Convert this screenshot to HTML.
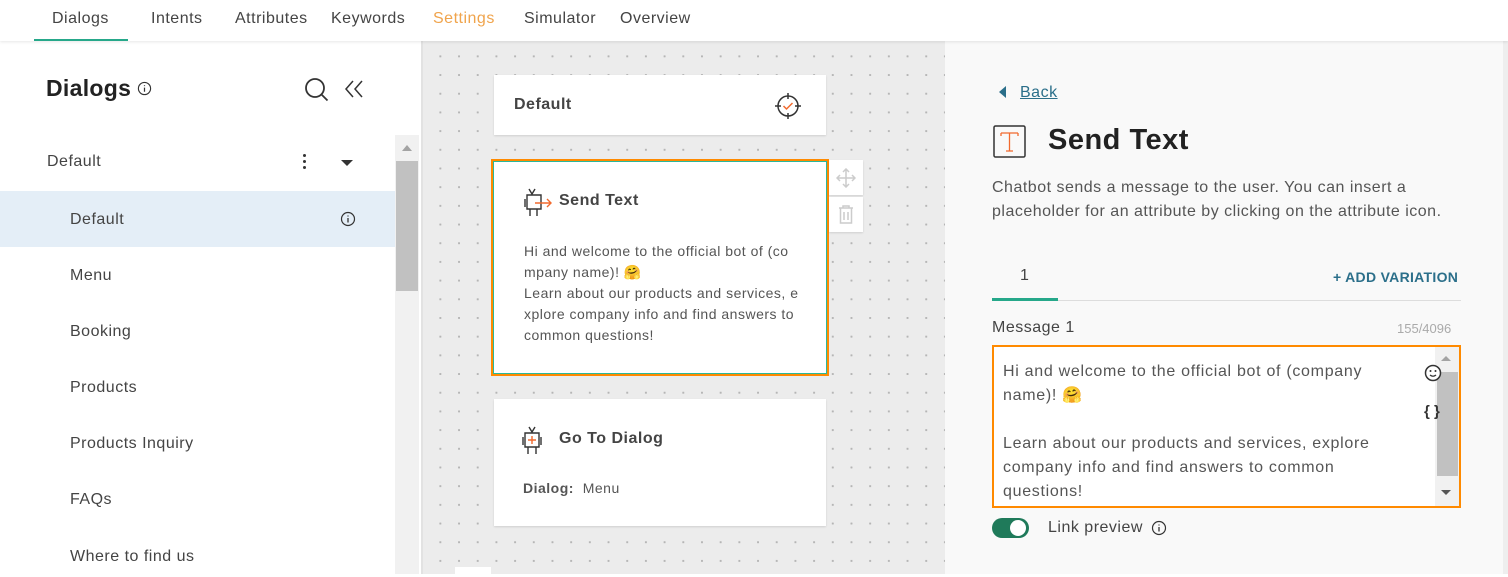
<!DOCTYPE html>
<html><head><meta charset="utf-8"><style>
*{box-sizing:border-box;margin:0;padding:0}
body{width:1508px;height:574px;overflow:hidden;font-family:"Liberation Sans",sans-serif;background:#fff;position:relative;color:#333;letter-spacing:.5px}
.abs{position:absolute}
.nav{left:0;top:0;width:1508px;height:41px;background:#fff;box-shadow:0 1px 3px rgba(0,0,0,.1);z-index:5}
.nav span{position:absolute;top:10px;font-size:16px;color:#444}
.side{left:0;top:41px;width:395px;height:533px;background:#fff}
.sb{left:395px;top:135px;width:24px;height:439px;background:#f1f1f1}
.canvas{left:421px;top:41px;width:524px;height:533px;background-color:#ececec;background-image:radial-gradient(#b5b5b5 1px,transparent 1.2px);background-size:18.7px 18.7px;background-position:8px 6px;border-left:2px solid #e2e2e2}
.card{background:#fff;box-shadow:0 1px 2px rgba(0,0,0,.12)}
.right{left:945px;top:41px;width:558px;height:533px;background:#f9f9f9}
.item{position:absolute;left:70px;font-size:16px;color:#444}
</style></head><body>
<div class="abs nav">
<span style="left:52px">Dialogs</span>
<div class="abs" style="left:34px;top:39px;width:94px;height:2px;background:#26a88a"></div>
<span style="left:151px">Intents</span>
<span style="left:235px">Attributes</span>
<span style="left:331px">Keywords</span>
<span style="left:433px;color:#f0a44c">Settings</span>
<span style="left:524px">Simulator</span>
<span style="left:620px">Overview</span>
</div>
<div class="abs side">
<div class="abs" style="left:46px;top:34px;font-size:23px;font-weight:bold;color:#222;letter-spacing:.3px">Dialogs</div>
<svg class="abs" style="left:137px;top:40px" width="15" height="15" viewBox="0 0 16 16"><circle cx="8" cy="8" r="6.5" fill="none" stroke="#333" stroke-width="1.2"/><path d="M8 7v4.5M8 4.5v1" stroke="#333" stroke-width="1.3"/></svg>
<svg class="abs" style="left:304px;top:36px" width="26" height="26" viewBox="0 0 26 26"><circle cx="11" cy="11" r="9" fill="none" stroke="#333" stroke-width="1.8"/><path d="M17.5 17.5l6 6" stroke="#333" stroke-width="1.8"/></svg>
<svg class="abs" style="left:343px;top:38px" width="22" height="20" viewBox="0 0 22 20"><path d="M10 2L3 10l7 8M19 2l-7 8 7 8" fill="none" stroke="#333" stroke-width="1.5"/></svg>
<div class="item" style="left:47px;top:112px">Default</div>
<div class="abs" style="left:303px;top:113px;width:3px;height:3px;background:#333;border-radius:50%;box-shadow:0 6px 0 #333,0 12px 0 #333"></div>
<div class="abs" style="left:341px;top:119px;border-left:6px solid transparent;border-right:6px solid transparent;border-top:6px solid #333"></div>
<div class="abs" style="left:0;top:150px;width:395px;height:56px;background:#e4eef7"></div>
<div class="item" style="top:170px">Default</div>
<svg class="abs" style="left:340px;top:170px" width="16" height="16" viewBox="0 0 16 16"><circle cx="8" cy="8" r="6.5" fill="none" stroke="#333" stroke-width="1.2"/><path d="M8 7v4.5M8 4.5v1" stroke="#333" stroke-width="1.3"/></svg>
<div class="item" style="top:226px">Menu</div>
<div class="item" style="top:282px">Booking</div>
<div class="item" style="top:338px">Products</div>
<div class="item" style="top:394px">Products Inquiry</div>
<div class="item" style="top:450px">FAQs</div>
<div class="item" style="top:507px">Where to find us</div>
</div>
<div class="abs sb"><div class="abs" style="left:7px;top:10px;border-left:5px solid transparent;border-right:5px solid transparent;border-bottom:6px solid #a3a3a3"></div><div class="abs" style="left:1px;top:26px;width:22px;height:130px;background:#c1c1c1"></div></div>
<div class="abs canvas"></div>
<div class="abs card" style="left:494px;top:75px;width:332px;height:60px"><div class="abs" style="left:20px;top:21px;font-size:16px;font-weight:bold;color:#444">Default</div>
<svg class="abs" style="left:280px;top:17px" width="28" height="28" viewBox="0 0 28 28"><circle cx="14" cy="14" r="10" fill="none" stroke="#333" stroke-width="1.5"/><path d="M14 1v6M14 21v6M1 14h6M21 14h6" stroke="#333" stroke-width="1.5"/><path d="M9.5 14l3 3 6-6" fill="none" stroke="#f26a2e" stroke-width="1.5"/></svg></div>
<div class="abs card" style="left:491px;top:159px;width:338px;height:217px;border:2px solid #ff8a00;box-shadow:inset 0 0 0 1px #2ab89a">
<svg class="abs" style="left:30px;top:26px" width="30" height="32" viewBox="0 0 30 32"><path d="M6 2l3 5 3-5M4 8h14v14H4zM2 12v8M7 22v7M14 22v7" fill="none" stroke="#333" stroke-width="1.4"/><path d="M12 16h16M24 12l4 4-4 4" fill="none" stroke="#f26a2e" stroke-width="1.4"/></svg>
<div class="abs" style="left:66px;top:31px;font-size:16px;font-weight:bold;color:#444">Send Text</div>
<div class="abs" style="left:31px;top:80px;font-size:14px;line-height:21px;color:#555;white-space:nowrap">Hi and welcome to the official bot of (co<br>mpany name)! 🤗<br>Learn about our products and services, e<br>xplore company info and find answers to<br>common questions!</div></div>
<div class="abs card" style="left:829px;top:160px;width:34px;height:35px"><svg class="abs" style="left:7px;top:8px" width="20" height="20" viewBox="0 0 20 20"><path d="M10 1v18M1 10h18M7 4l3-3 3 3M7 16l3 3 3-3M4 7l-3 3 3 3M16 7l3 3-3 3" fill="none" stroke="#ccc" stroke-width="1.5"/></svg></div>
<div class="abs card" style="left:829px;top:197px;width:34px;height:35px"><svg class="abs" style="left:9px;top:7px" width="16" height="20" viewBox="0 0 16 20"><path d="M1 4h14M5 4V2h6v2M2.5 4v15h11V4M6 8v8M10 8v8" fill="none" stroke="#ccc" stroke-width="1.5"/></svg></div>
<div class="abs card" style="left:494px;top:399px;width:332px;height:127px">
<svg class="abs" style="left:28px;top:26px" width="28" height="32" viewBox="0 0 28 32"><path d="M7 2l3 5 3-5M3 8h14v14H3zM1 12v8M19 12v8M6 22v7M14 22v7" fill="none" stroke="#333" stroke-width="1.4"/><path d="M10 11v8M6 15h8" stroke="#f26a2e" stroke-width="1.4"/></svg>
<div class="abs" style="left:65px;top:31px;font-size:16px;font-weight:bold;color:#444">Go To Dialog</div>
<div class="abs" style="left:29px;top:81px;font-size:14px;color:#555"><b>Dialog:</b>&nbsp;&nbsp;Menu</div></div>
<div class="abs" style="left:455px;top:567px;width:36px;height:10px;background:#fff"></div>
<div class="abs right">
<div class="abs" style="left:54px;top:45px;border-top:6px solid transparent;border-bottom:6px solid transparent;border-right:7px solid #2b6f8a"></div>
<div class="abs" style="left:75px;top:43px;font-size:16px;color:#2b6f8a;text-decoration:underline">Back</div>
<svg class="abs" style="left:48px;top:84px" width="34" height="34" viewBox="0 0 34 34"><rect x="1" y="1" width="31" height="31" rx="1.5" fill="none" stroke="#333" stroke-width="1.5"/><path d="M8 8h17M16.5 8v18M13 26h7M8 8v3M25 8v3" fill="none" stroke="#f26a2e" stroke-width="1.3"/></svg>
<div class="abs" style="left:103px;top:83px;font-size:29px;font-weight:bold;color:#222">Send Text</div>
<div class="abs" style="left:47px;top:135px;font-size:16px;line-height:24px;color:#555;white-space:nowrap">Chatbot sends a message to the user. You can insert a<br>placeholder for an attribute by clicking on the attribute icon.</div>
<div class="abs" style="left:75px;top:226px;font-size:16px;color:#444">1</div>
<div class="abs" style="left:388px;top:228px;font-size:14px;font-weight:bold;color:#2b6f8a;letter-spacing:.3px">+ ADD VARIATION</div>
<div class="abs" style="left:47px;top:259px;width:469px;height:1px;background:#ddd"></div>
<div class="abs" style="left:47px;top:257px;width:66px;height:3px;background:#26a88a"></div>
<div class="abs" style="left:47px;top:278px;font-size:16px;color:#444">Message 1</div>
<div class="abs" style="left:452px;top:280px;font-size:13px;color:#aaa;letter-spacing:0">155/4096</div>
<div class="abs" style="left:47px;top:304px;width:469px;height:163px;background:#fff;border:2px solid #ff8a00">
<div class="abs" style="left:9px;top:13px;width:400px;font-size:16px;line-height:24px;color:#555;letter-spacing:.7px">Hi and welcome to the official bot of (company name)! 🤗<br><br>Learn about our products and services, explore company info and find answers to common questions!</div>
<div class="abs" style="left:441px;top:0;width:24px;height:159px;background:#f1f1f1"><div class="abs" style="left:6px;top:9px;border-left:5px solid transparent;border-right:5px solid transparent;border-bottom:5px solid #a3a3a3"></div><div class="abs" style="left:2px;top:25px;width:21px;height:104px;background:#c1c1c1"></div><div class="abs" style="left:6px;top:143px;border-left:5px solid transparent;border-right:5px solid transparent;border-top:5px solid #555"></div></div>
<svg class="abs" style="left:430px;top:17px" width="18" height="18" viewBox="0 0 18 18"><circle cx="9" cy="9" r="7.5" fill="#fff" stroke="#333" stroke-width="1.5"/><circle cx="6.5" cy="7" r="1" fill="#333"/><circle cx="11.5" cy="7" r="1" fill="#333"/><path d="M6 11q3 2.5 6 0" fill="none" stroke="#333" stroke-width="1.3"/></svg>
<div class="abs" style="left:430px;top:56px;font-size:15px;font-weight:bold;color:#333;letter-spacing:0">{ }</div>
</div>
<div class="abs" style="left:47px;top:477px;width:37px;height:20px;border-radius:10px;background:#1f7a5a"><div class="abs" style="left:18px;top:2px;width:16px;height:16px;border-radius:50%;background:#fff"></div></div>
<div class="abs" style="left:103px;top:478px;font-size:16px;color:#444">Link preview</div>
<svg class="abs" style="left:206px;top:479px" width="16" height="16" viewBox="0 0 16 16"><circle cx="8" cy="8" r="6.5" fill="none" stroke="#333" stroke-width="1.2"/><path d="M8 7v4.5M8 4.5v1" stroke="#333" stroke-width="1.3"/></svg>
</div>
<div class="abs" style="left:1503px;top:41px;width:5px;height:533px;background:#eee"></div>
</body></html>
